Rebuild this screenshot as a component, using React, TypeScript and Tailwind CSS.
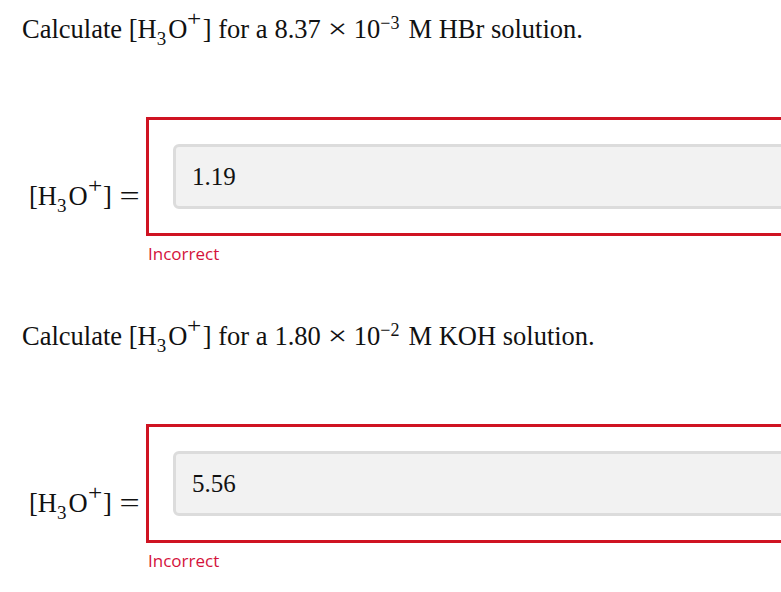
import React from 'react';

const serif = { fontFamily: '"Liberation Serif", "Times New Roman", serif' };

// [H3O+] with a dropped subscript and a raised plus
const Hydronium: React.FC = () => (
  <span className="whitespace-nowrap">
    [H
    <span className="relative top-[7px] inline-block text-[19px] leading-none mr-[2px]">3</span>
    O
    <span className="relative top-[-12px] inline-block text-[22px] leading-none scale-x-[1.15] ml-[1px] mr-[2px]">+</span>
    ]
  </span>
);

interface ProblemProps {
  coeff: string;
  exp: string;
  solute: string;
  answer: string;
}

const Problem: React.FC<ProblemProps> = ({ coeff, exp, solute, answer }) => (
  <div className="flex flex-col">
    <p className="text-[26.5px] leading-[30px] text-[#111] whitespace-nowrap" style={serif}>
      Calculate <Hydronium /> for a
      <span className="ml-[7px]">{coeff}</span>
      <span className="inline-block mx-[9px] scale-x-[1.3]">×</span>
      10
      <span className="relative top-[-9px] inline-block text-[18px] leading-none">−{exp}</span>
      <span className="ml-[9px]">M {solute} solution.</span>
    </p>

    <div className="mt-[73px] flex items-start">
      <div
        className="w-[124px] shrink-0 pl-[7px] pt-[64px] text-[26.5px] leading-[30px] text-[#111] whitespace-nowrap"
        style={serif}
      >
        <Hydronium />
        <span className="inline-block ml-[10px] scale-x-[1.35]">=</span>
      </div>
      <div className="flex flex-col">
        <div className="w-[700px] border-[3px] border-[#cf1322] p-[24px] pr-0">
          <div className="h-[65px] flex items-center rounded-[6px] border-[3px] border-[#dcdcdc] bg-[#f2f2f2] pl-[16px]">
            <span className="text-[25px] text-[#111]" style={serif}>{answer}</span>
          </div>
        </div>
        <span
          className="mt-[8px] ml-[2px] text-[17px] leading-[20px] text-[#d4123b]"
          style={{ fontFamily: '"Open Sans", "Noto Sans", sans-serif' }}
        >
          Incorrect
        </span>
      </div>
    </div>
  </div>
);

export default function App() {
  return (
    <div className="w-[781px] h-[592px] overflow-hidden bg-white pl-[22px] pt-[14px]">
      <div className="flex flex-col gap-[57px]">
        <Problem coeff="8.37" exp="3" solute="HBr" answer="1.19" />
        <Problem coeff="1.80" exp="2" solute="KOH" answer="5.56" />
      </div>
    </div>
  );
}
